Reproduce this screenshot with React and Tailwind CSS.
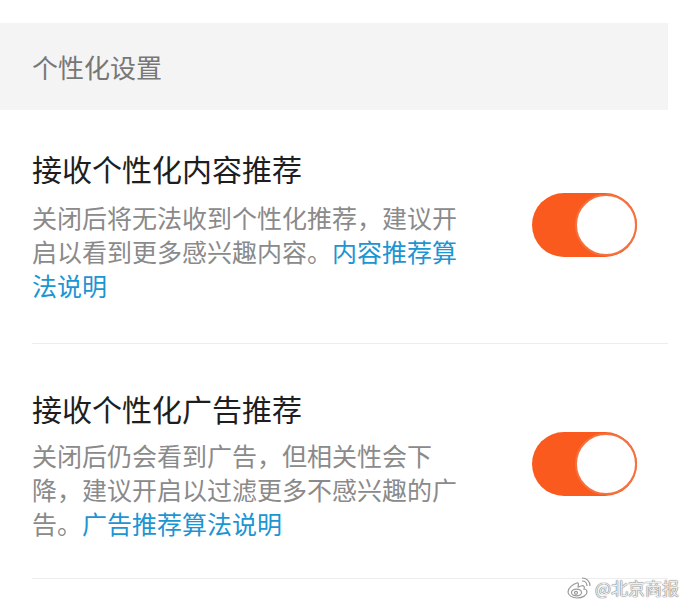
import React from "react";

function Toggle() {
  return (
    <div className="relative w-[105px] h-[64px] shrink-0 rounded-full bg-[#fb5a1e]">
      <div className="absolute right-0 top-[1px] w-[62px] h-[62px] rounded-full bg-white border-2 border-[#f3723f]" />
    </div>
  );
}

function Section({ title, children, gap }) {
  return (
    <div className="ml-[32px] w-[636px] pr-[31px] flex items-center justify-between">
      <div className="w-[440px]">
        <div className="text-[30px] leading-[40px] text-[#1e1e1e]">{title}</div>
        <div className={`${gap} text-[25px] leading-[34px] text-[#8a8a8a]`}>{children}</div>
      </div>
      <Toggle />
    </div>
  );
}

export default function App() {
  return (
    <div
      className="relative w-[690px] h-[607px] overflow-hidden bg-white pt-[23px]"
      style={{ fontFamily: '"Noto Sans CJK SC", "Noto Sans", sans-serif' }}
    >
      <div className="w-[668px] h-[87px] bg-[#f4f4f4] flex items-center pl-[32px] text-[26px] text-[#777777]">
        个性化设置
      </div>

      <div className="pt-[38px] pb-[41px]">
        <Section title="接收个性化内容推荐" gap="mt-[12px]">
          关闭后将无法收到个性化推荐，建议开启以看到更多感兴趣内容。
          <span className="text-[#1c95d3]">内容推荐算法说明</span>
        </Section>
      </div>
      <div className="ml-[32px] w-[636px] h-px bg-[#ededed]" />

      <div className="pt-[44px] pb-[38px]">
        <Section title="接收个性化广告推荐" gap="mt-[10px]">
          关闭后仍会看到广告，但相关性会下降，建议开启以过滤更多不感兴趣的广告。
          <span className="text-[#1c95d3]">广告推荐算法说明</span>
        </Section>
      </div>
      <div className="ml-[32px] w-[636px] h-px bg-[#ededed]" />

      <div className="absolute left-[566px] top-[576px] flex items-center gap-[3px] whitespace-nowrap">
        <svg width="26" height="24" viewBox="0 0 26 24" fill="none">
          <g stroke="#9a9a9a" strokeWidth="1.2">
            <path d="M11 7c-4 1-9 5-9 9 0 3 4 6 9 6 6 0 10-3 10-6 0-2-2-3-3-3 1-2 0-4-3-3-1 0-2 1-3 1 1-3 0-5-1-4z" fill="#fff" />
            <ellipse cx="10.5" cy="16.5" rx="5" ry="3.4" />
            <circle cx="10" cy="16.8" r="1.5" />
            <path d="M16 5c3 0 5 2 5 5" />
            <path d="M16 2c4.5 0 8 3 8 8" />
          </g>
        </svg>
        <span className="text-[17px] leading-[22px] text-[#eeeeee] [text-shadow:0_0_1px_#666,0_0_1px_#666]">
          @北京商报
        </span>
      </div>
    </div>
  );
}
